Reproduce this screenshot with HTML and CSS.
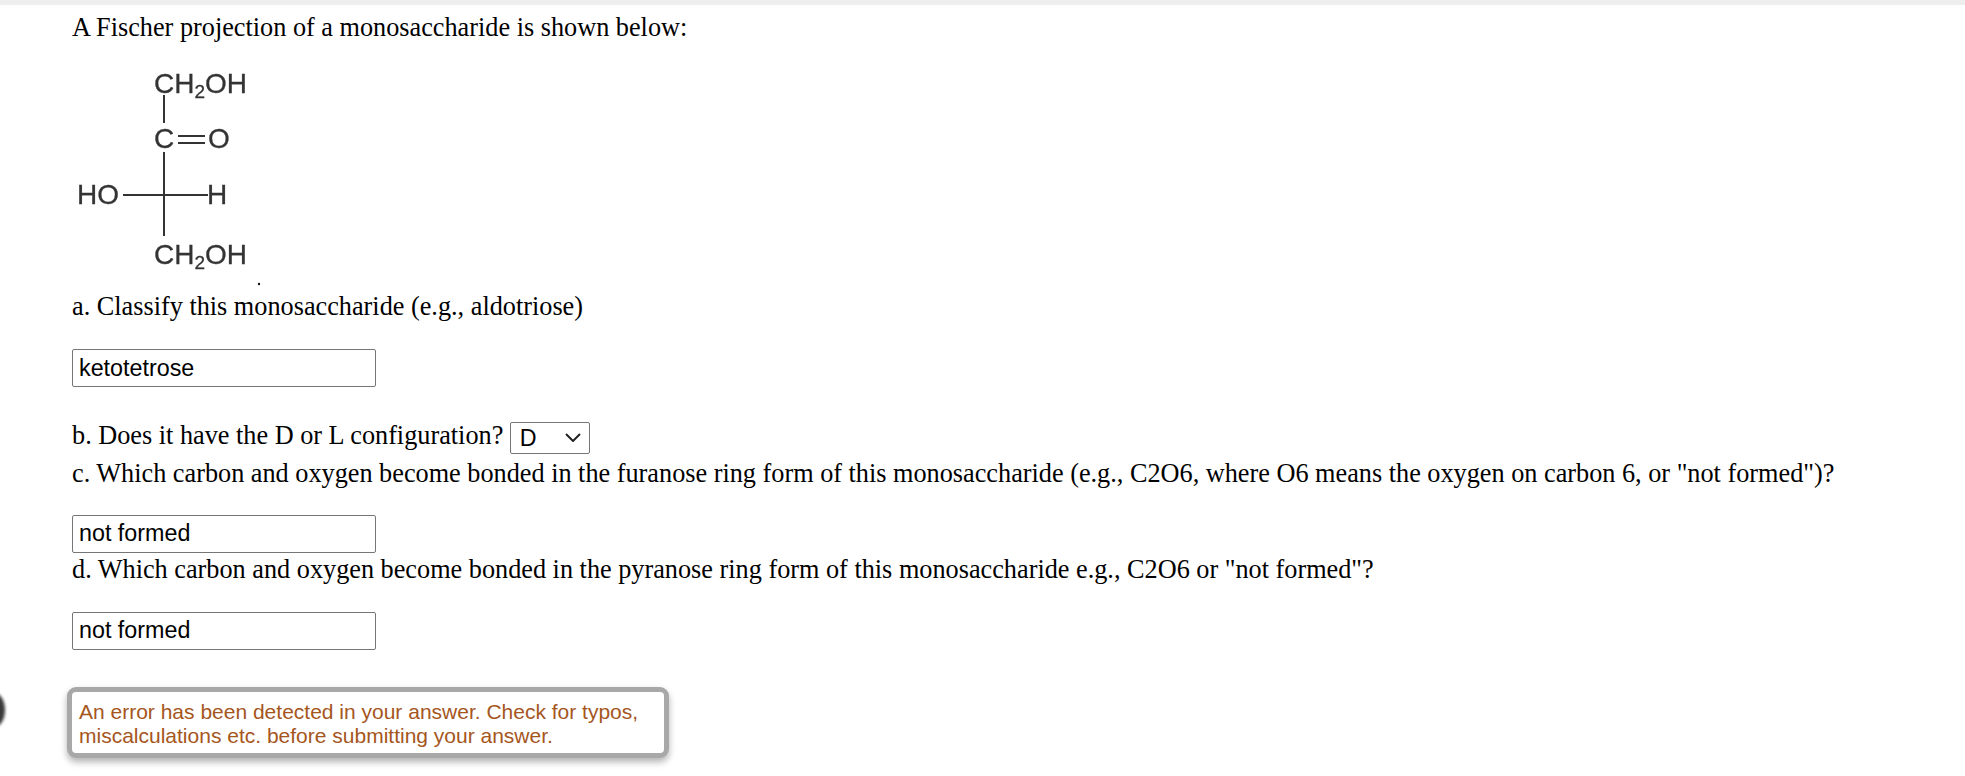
FILE: index.html
```html
<!DOCTYPE html>
<html lang="en">
  <head>
    <meta charset="utf-8">
    <title>Fischer projection question</title>
    <link rel="stylesheet" href="styles.css">
  </head>
  <body>
    <div class="topbar"></div>
    <span class="blob"></span>
    <div class="container">
      <p class="line intro">A Fischer projection of a monosaccharide is shown below:</p>
      <svg class="fischer" width="220" height="230" viewBox="72 56 220 230">
        <g class="bonds">
          <path d="M164 95V123M164 152V236M123 195H208M178 136H205M178 143H205"></path>
        </g>
        <text x="154" y="93">CH<tspan class="sub" dy="5">2</tspan><tspan dy="-5">OH</tspan></text>
        <text x="154" y="148">C</text>
        <text x="208" y="148">O</text>
        <text x="77" y="204">HO</text>
        <text x="207" y="204">H</text>
        <text x="154" y="264">CH<tspan class="sub" dy="5">2</tspan><tspan dy="-5">OH</tspan></text>
        <circle cx="259" cy="284" r="1.2"></circle>
      </svg>
      <p class="line q-a">a. Classify this monosaccharide (e.g., aldotriose)</p>
      <input class="answer answer-a" type="text" value="ketotetrose">
      <p class="line q-b">b. Does it have the D or L configuration?
        <select class="choice">
          <option>D</option>
          <option>L</option>
        </select>
      </p>
      <p class="line q-c">c. Which carbon and oxygen become bonded in the furanose ring form of this monosaccharide (e.g., C2O6, where O6 means the oxygen on carbon 6, or "not formed")?</p>
      <input class="answer answer-c" type="text" value="not formed">
      <p class="line q-d">d. Which carbon and oxygen become bonded in the pyranose ring form of this monosaccharide e.g., C2O6 or "not formed"?</p>
      <input class="answer answer-d" type="text" value="not formed">
      <div class="alert">An error has been detected in your answer. Check for typos, miscalculations etc. before submitting your answer.</div>
    </div>
  </body>
</html>
```

FILE: styles.css
```css
html, body { margin: 0; padding: 0; background: #fff; }
body { color: #000; font: 26.25px/30px "Liberation Serif", "Times New Roman", serif; height: 776px; overflow: hidden; position: relative; }
.topbar { height: 5px; background: #eee; }
.blob { position: absolute; left: -16px; top: 693px; width: 21px; height: 34px; border-radius: 50%; background: #3a3a3a; filter: blur(1.6px); }
.container { padding-left: 72px; }
.line { margin: 0; white-space: nowrap; }
.intro { padding-top: 8px; }
.fischer { display: block; margin-top: 13px; filter: blur(.4px); }
.fischer text { font: 28px "Liberation Sans", Arial, sans-serif; fill: #333; stroke: #333; stroke-width: .3; }
.fischer .sub { font-size: 19px; }
.fischer circle { fill: #111; }
.bonds path { stroke: #333; stroke-width: 2; fill: none; }
.q-a { margin-top: 6px; }
.answer {
  display: block; box-sizing: border-box; width: 304px; height: 38px;
  padding: 0 6px; margin: 0;
  border: 1px solid #767676; border-radius: 2px; background: #fff; color: #000;
  font: 23.3px "Liberation Sans", Arial, sans-serif;
}
.answer-a { margin-top: 27px; }
.q-b { margin-top: 34px; }
.choice {
  box-sizing: border-box; width: 80px; height: 32px; padding: 0 0 0 9px; margin: 0;
  border: 1px solid #767676; border-radius: 2px; color: #000;
  appearance: none; -webkit-appearance: none;
  background: #fff url("data:image/svg+xml,%3Csvg xmlns='http://www.w3.org/2000/svg' width='16' height='9'%3E%3Cpath d='M1 1l7 7 7-7' fill='none' stroke='%23222' stroke-width='2'/%3E%3C/svg%3E") no-repeat right 8px center;
  font: 23.3px "Liberation Sans", Arial, sans-serif; vertical-align: middle;
}
.q-c { margin-top: 5px; }
.answer-c { margin-top: 26px; }
.q-d { margin-top: 2px; }
.answer-d { margin-top: 27px; }
.alert {
  box-sizing: border-box; width: 602px; height: 71px; margin: 37px 0 0 -5px;
  padding: 8px 7px 6px; border: 5px solid #a8a8a8; border-radius: 9px;
  box-shadow: 0 4px 7px rgba(0, 0, 0, .3);
  color: #a5561d; background: #fff;
  font: 21px/24px "Liberation Sans", Arial, sans-serif;
}
```
